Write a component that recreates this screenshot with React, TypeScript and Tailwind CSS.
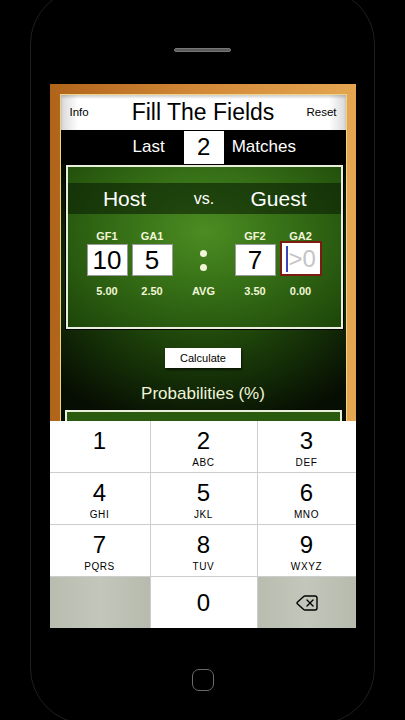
import { Delete } from 'lucide-react';

const keys = [
  { d: '1', l: '' },
  { d: '2', l: 'ABC' },
  { d: '3', l: 'DEF' },
  { d: '4', l: 'GHI' },
  { d: '5', l: 'JKL' },
  { d: '6', l: 'MNO' },
  { d: '7', l: 'PQRS' },
  { d: '8', l: 'TUV' },
  { d: '9', l: 'WXYZ' },
];

function ScoreBox({ value }: { value: string }) {
  return (
    <div className="w-[41px] h-[32px] bg-white border border-[#9a9a9a] flex items-center justify-center text-[26px] leading-none text-black">
      {value}
    </div>
  );
}

export default function App() {
  return (
    <div className="w-[405px] h-[720px] bg-black overflow-hidden font-['Liberation_Sans',Arial,sans-serif]">
      {/* Phone body */}
      <div className="-mt-[12px] mx-[30px] h-[736px] rounded-[56px] border-[1.5px] border-[#1f1f1f] flex flex-col items-center pt-[59px]">
        {/* Speaker */}
        <div className="w-[57px] h-[4px] rounded-full bg-[#5a5a5a] border border-[#777] shrink-0" />

        {/* Screen */}
        <div className="mt-[32px] w-[306px] h-[544px] flex flex-col shrink-0">
          {/* Board with wooden frame */}
          <div className="h-[337px] shrink-0 overflow-hidden bg-gradient-to-r from-[#b0641a] via-[#d38a38] to-[#e4a651] pt-[10px] pl-[10px] pr-[9px]">
            <div className="h-full bg-black border-t border-l border-r border-[#f2d489] flex flex-col">
              {/* Title bar */}
              <div className="h-[35px] shrink-0 bg-[linear-gradient(to_right,#d8d8d8,#ffffff_6%,#ffffff_94%,#d8d8d8)] flex items-center justify-between px-[9px] shadow-[inset_0_2px_3px_rgba(0,0,0,0.2)]">
                <span className="text-[11.5px] text-black w-[40px]">Info</span>
                <span className="text-[23px] text-black leading-none">Fill The Fields</span>
                <span className="text-[11.5px] text-black w-[40px] text-right">Reset</span>
              </div>

              {/* Last N matches */}
              <div className="h-[34px] shrink-0 bg-black flex items-center pl-[72px]">
                <span className="text-[17px] text-white mr-[19px]">Last</span>
                <div className="w-[40px] h-[33px] bg-white flex items-center justify-center text-[24px] text-black">2</div>
                <span className="text-[17px] text-white ml-[8px]">Matches</span>
              </div>

              {/* Chalkboard */}
              <div className="flex-1 min-h-0 overflow-hidden flex flex-col items-center bg-[radial-gradient(ellipse_70%_60%_at_50%_45%,#356614_0%,#1d420a_45%,#060d02_100%)]">
                {/* Teams panel */}
                <div className="shrink-0 mt-[1px] ml-[2px] w-[277px] h-[164px] border-2 border-[#e9efdc] outline outline-1 outline-black bg-[radial-gradient(ellipse_at_50%_40%,#4c8c22_0%,#356e16_45%,#1c4509_100%)] flex flex-col">
                  <div className="mt-[16px] h-[31px] shrink-0 bg-[rgba(10,30,4,0.6)] flex items-center justify-between px-[19px]">
                    <span className="w-[86px] text-center text-[21px] text-white pr-[10px]">Host</span>
                    <span className="text-[16px] text-white">vs.</span>
                    <span className="w-[86px] text-center text-[21px] text-white">Guest</span>
                  </div>

                  <div className="mt-[17px] flex justify-between px-[19px]">
                    {/* Host */}
                    <div className="flex gap-[4px]">
                      {[
                        ['GF1', '10', '5.00'],
                        ['GA1', '5', '2.50'],
                      ].map(([lab, v, avg]) => (
                        <div key={lab} className="flex flex-col items-center">
                          <span className="text-[11px] font-bold text-[#f1f6d6] leading-none mb-[2px]">{lab}</span>
                          <ScoreBox value={v} />
                          <span className="text-[11px] font-bold text-[#f1f6d6] leading-none mt-[10px]">{avg}</span>
                        </div>
                      ))}
                    </div>

                    {/* Colon + AVG */}
                    <div className="flex flex-col items-center">
                      <div className="h-[13px]" />
                      <div className="h-[32px] flex flex-col items-center justify-center gap-[7px]">
                        <div className="w-[7px] h-[7px] rounded-full bg-[#f1f6d6]" />
                        <div className="w-[7px] h-[7px] rounded-full bg-[#f1f6d6]" />
                      </div>
                      <span className="text-[11px] font-bold text-[#f1f6d6] leading-none mt-[10px]">AVG</span>
                    </div>

                    {/* Guest */}
                    <div className="flex gap-[4px]">
                      <div className="flex flex-col items-center">
                        <span className="text-[11px] font-bold text-[#f1f6d6] leading-none mb-[2px]">GF2</span>
                        <ScoreBox value="7" />
                        <span className="text-[11px] font-bold text-[#f1f6d6] leading-none mt-[10px]">3.50</span>
                      </div>
                      <div className="flex flex-col items-center">
                        <span className="text-[11px] font-bold text-[#f1f6d6] leading-none -mb-[1px]">GA2</span>
                        <div className="w-[42px] h-[35px] bg-white border-2 border-[#7d1b12] flex items-center pl-[4px] text-[24px] leading-none text-[#c4c4c4]">
                          <div className="w-[2px] h-[26px] bg-[#3a46b8] mr-[1px]" />
                          &gt;0
                        </div>
                        <span className="text-[11px] font-bold text-[#f1f6d6] leading-none mt-[10px]">0.00</span>
                      </div>
                    </div>
                  </div>
                </div>

                {/* Calculate */}
                <button className="shrink-0 mt-[19px] w-[76px] h-[20px] bg-white text-[11px] text-black shadow-[1px_2px_2px_rgba(0,0,0,0.6)]">
                  Calculate
                </button>

                <div className="shrink-0 mt-[16px] text-[17px] text-[#eef5d8] leading-[20px]">Probabilities (%)</div>

                {/* Probabilities panel (mostly hidden by keyboard) */}
                <div className="shrink-0 mt-[6px] w-[277px] h-[60px] border-2 border-[#e9efdc] bg-[#295a0e]" />
              </div>
            </div>
          </div>

          {/* Numeric keypad */}
          <div className="h-[207px] shrink-0 grid grid-cols-[100px_106px_1fr] grid-rows-[51px_51px_51px_51px] gap-px bg-[#cdcdcd]">
            {keys.map((k) => (
              <div key={k.d} className="bg-white flex flex-col items-center pt-[8px] text-black">
                <span className="text-[24px] leading-none">{k.d}</span>
                {k.l && <span className="text-[10px] leading-none mt-[5px] tracking-[0.6px]">{k.l}</span>}
              </div>
            ))}
            <div className="bg-gradient-to-r from-[#b9bdb0] via-[#c3c6ba] to-[#b7bbae]" />
            <div className="bg-white flex items-center justify-center text-[24px] text-black leading-none">0</div>
            <div className="bg-gradient-to-r from-[#b9bdb0] via-[#c3c6ba] to-[#b7bbae] flex items-center justify-center">
              <Delete size={24} strokeWidth={1.4} className="text-black" />
            </div>
          </div>
        </div>

        {/* Home button */}
        <div className="shrink-0 mt-[41px] w-[22px] h-[22px] rounded-[7px] border-[1.5px] border-[#6a6a6a]" />
      </div>
    </div>
  );
}
